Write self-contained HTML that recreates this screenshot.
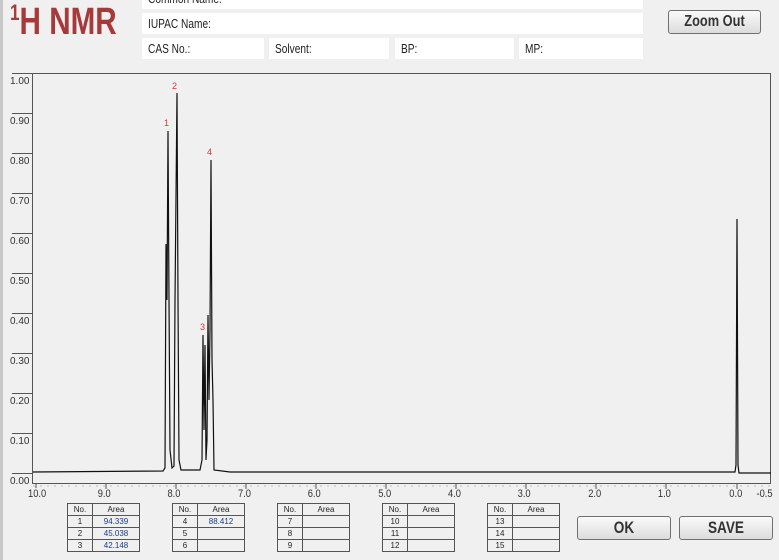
<!DOCTYPE html>
<html><head><meta charset="utf-8"><style>
html,body{margin:0;width:779px;height:560px;overflow:hidden;}
body{background:#f0f0f0;position:relative;font-family:"Liberation Sans",sans-serif;}
.abs{position:absolute;}
.fld{position:absolute;background:#fff;height:21px;box-sizing:border-box;}
.fld span{position:absolute;left:6px;top:3px;font-size:13px;color:#222;transform:scaleX(0.78);transform-origin:left;white-space:nowrap;}
.btn{position:absolute;border:1px solid #707070;border-radius:3px;background:linear-gradient(#fafafa,#dcdcdc);color:#333;box-sizing:border-box;}
.btn span{position:absolute;left:0;right:0;text-align:center;font-weight:bold;transform:scaleX(0.8);}
table{position:absolute;border-collapse:collapse;font-size:8px;table-layout:fixed;}
td{border:1px solid #555;height:11px;line-height:11px;padding:0;text-align:center;color:#222;overflow:hidden;}
td.v{color:#1a3a8a;}
</style></head><body>
<div class="abs" style="left:0;top:0;width:3px;height:560px;background:#c8c8c8"></div>
<div class="abs" style="left:10px;top:1px;font-size:38px;font-weight:bold;color:#a63a3a;transform:scaleX(0.78);transform-origin:left;white-space:nowrap;"><span style="font-size:22px;position:relative;top:-14px">1</span>H NMR</div>
<div class="fld" style="left:142px;top:-12px;width:501px"><span>Common Name:</span></div>
<div class="fld" style="left:142px;top:13px;width:501px"><span>IUPAC Name:</span></div>
<div class="fld" style="left:142px;top:38px;width:122px"><span>CAS No.:</span></div>
<div class="fld" style="left:269px;top:38px;width:120px"><span>Solvent:</span></div>
<div class="fld" style="left:395px;top:38px;width:119px"><span>BP:</span></div>
<div class="fld" style="left:519px;top:38px;width:124px"><span>MP:</span></div>
<div class="btn" style="left:668px;top:10px;width:93px;height:24px"><span style="font-size:16px;top:2px">Zoom Out</span></div>
<svg class="abs" style="left:0;top:0" width="779" height="500">
<rect x="32.5" y="73.5" width="738" height="410" stroke="#555" fill="none"/>
<g stroke="#555">
<line x1="12" y1="73.5" x2="32" y2="73.5"/>
<line x1="12" y1="113.5" x2="32" y2="113.5"/><line x1="12" y1="153.5" x2="32" y2="153.5"/>
<line x1="12" y1="193.5" x2="32" y2="193.5"/><line x1="12" y1="233.5" x2="32" y2="233.5"/>
<line x1="12" y1="273.5" x2="32" y2="273.5"/><line x1="12" y1="313.5" x2="32" y2="313.5"/>
<line x1="12" y1="353.5" x2="32" y2="353.5"/><line x1="12" y1="393.5" x2="32" y2="393.5"/>
<line x1="12" y1="433.5" x2="32" y2="433.5"/><line x1="12" y1="473.5" x2="32" y2="473.5"/>
</g>
<g font-family="Liberation Sans" font-size="10" fill="#333">
<text x="10" y="84">1.00</text><text x="10" y="124">0.90</text><text x="10" y="164">0.80</text>
<text x="10" y="204">0.70</text><text x="10" y="244">0.60</text><text x="10" y="284">0.50</text>
<text x="10" y="324">0.40</text><text x="10" y="364">0.30</text><text x="10" y="404">0.20</text>
<text x="10" y="444">0.10</text><text x="10" y="484">0.00</text>
</g>
<g stroke="#555"><path d="M36 484v4M106 484v5M176 484v5M246 484v5M316 484v5M386 484v5M456 484v5M526 484v5M596 484v5M666 484v5M737 484v5"/></g>
<g stroke="#bbb" stroke-dasharray="2,5"><line x1="33" y1="486" x2="770" y2="486"/></g>
<g font-family="Liberation Sans" font-size="11" fill="#333" transform="scale(0.85,1)">
<text x="33" y="497">10.0</text><text x="115" y="497">9.0</text><text x="197" y="497">8.0</text>
<text x="280" y="497">7.0</text><text x="362" y="497">6.0</text><text x="445" y="497">5.0</text>
<text x="527" y="497">4.0</text><text x="609" y="497">3.0</text><text x="692" y="497">2.0</text>
<text x="774" y="497">1.0</text><text x="858" y="497">0.0</text><text x="890" y="497">-0.5</text>
</g>
<polyline fill="none" stroke="#111" stroke-width="1.2" points="33,472 163,471 165,468 166,244 167,300 168,131 169,300 170,450 172,468 174,466 175,300 177,93 178,300 179,460 181,470 200,470 202,460 203,335 204,430 205,345 206,460 207,440 208,315 209,400 210,330 211,160 212,360 213,400 214,470 230,472 735,472 736,465 737,219 738,465 739,473 771,473"/>
<g font-family="Liberation Sans" font-size="9" fill="#e03040">
<text x="164" y="126">1</text><text x="172" y="89">2</text><text x="200" y="330">3</text><text x="207" y="155">4</text>
</g>
</svg>
<table style="left:67px;top:503px;width:73px"><tr><td style="width:24px">No.</td><td>Area</td></tr><tr><td>1</td><td class="v">94.339</td></tr><tr><td>2</td><td class="v">45.038</td></tr><tr><td>3</td><td class="v">42.148</td></tr></table>
<table style="left:172px;top:503px;width:73px"><tr><td style="width:24px">No.</td><td>Area</td></tr><tr><td>4</td><td class="v">88.412</td></tr><tr><td>5</td><td></td></tr><tr><td>6</td><td></td></tr></table>
<table style="left:277px;top:503px;width:73px"><tr><td style="width:24px">No.</td><td>Area</td></tr><tr><td>7</td><td></td></tr><tr><td>8</td><td></td></tr><tr><td>9</td><td></td></tr></table>
<table style="left:382px;top:503px;width:73px"><tr><td style="width:24px">No.</td><td>Area</td></tr><tr><td>10</td><td></td></tr><tr><td>11</td><td></td></tr><tr><td>12</td><td></td></tr></table>
<table style="left:487px;top:503px;width:73px"><tr><td style="width:24px">No.</td><td>Area</td></tr><tr><td>13</td><td></td></tr><tr><td>14</td><td></td></tr><tr><td>15</td><td></td></tr></table>
<div class="btn" style="left:577px;top:516px;width:94px;height:24px"><span style="font-size:17px;top:1px">OK</span></div>
<div class="btn" style="left:679px;top:516px;width:94px;height:24px"><span style="font-size:17px;top:1px">SAVE</span></div>
</body></html>
